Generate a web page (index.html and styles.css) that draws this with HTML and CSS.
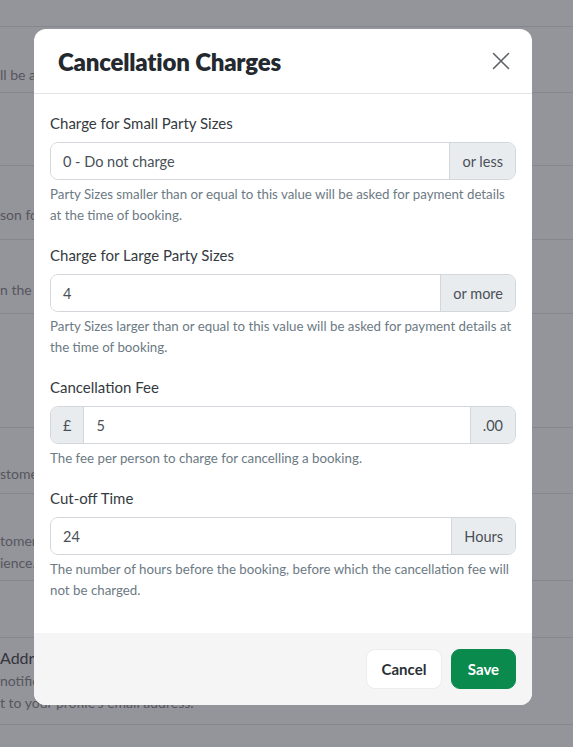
FILE: index.html
```html
<!DOCTYPE html>
<html lang="en">
<head>
<meta charset="utf-8">
<title>Cancellation Charges</title>
<link rel="stylesheet" href="styles.css">
</head>
<body>
<div class="page">
  <div class="row r1"></div>
  <div class="row r2"><p class="bgtext clip">ll be asked for payment details</p></div>
  <div class="row r3"></div>
  <div class="row r4"><p class="bgtext clip">son for cancelling</p></div>
  <div class="row r5"><p class="bgtext clip">n the cancellation</p></div>
  <div class="row r6"></div>
  <div class="row r7"><p class="bgtext clip">stomers</p></div>
  <div class="row r8"><p class="bgtext clip">tomers will be</p><p class="bgtext clip">ience.</p></div>
  <div class="row r9"></div>
  <div class="row r10"><p class="bgtitle clip">Address</p><p class="bgtext clip">notifications</p><p class="bgtext">t to your profile's email address.</p></div>
  <div class="row r11"></div>
</div>

<div class="modal">
  <div class="modal-header">
    <h5 class="modal-title">Cancellation Charges</h5>
    <button class="close" aria-label="Close">
      <svg width="18" height="18" viewBox="0 0 18 18"><path d="M1.5 1.5 L16.5 16.5 M16.5 1.5 L1.5 16.5" stroke="#5f6368" stroke-width="1.6" fill="none" stroke-linecap="round"/></svg>
    </button>
  </div>
  <div class="modal-body">
    <div class="group">
      <label class="label">Charge for Small Party Sizes</label>
      <div class="input-group">
        <div class="field">0 - Do not charge</div>
        <div class="addon addon-right">or less</div>
      </div>
      <p class="help">Party Sizes smaller than or equal to this value will be asked for payment details at the time of booking.</p>
    </div>
    <div class="group">
      <label class="label">Charge for Large Party Sizes</label>
      <div class="input-group">
        <div class="field">4</div>
        <div class="addon addon-right">or more</div>
      </div>
      <p class="help">Party Sizes larger than or equal to this value will be asked for payment details at the time of booking.</p>
    </div>
    <div class="group">
      <label class="label">Cancellation Fee</label>
      <div class="input-group">
        <div class="addon addon-left">£</div>
        <div class="field">5</div>
        <div class="addon addon-right">.00</div>
      </div>
      <p class="help">The fee per person to charge for cancelling a booking.</p>
    </div>
    <div class="group">
      <label class="label">Cut-off Time</label>
      <div class="input-group">
        <div class="field">24</div>
        <div class="addon addon-right">Hours</div>
      </div>
      <p class="help">The number of hours before the booking, before which the cancellation fee will not be charged.</p>
    </div>
  </div>
  <div class="modal-footer">
    <button class="btn btn-cancel">Cancel</button>
    <button class="btn btn-save">Save</button>
  </div>
</div>
</body>
</html>
```

FILE: styles.css
```css
* { box-sizing: border-box; }
html, body { margin: 0; padding: 0; }
body {
  background: #94949b;
  font-family: "Lato", "Noto Sans", sans-serif;
  width: 573px;
  height: 747px;
  overflow: hidden;
  position: relative;
}
.page { width: 573px; }
.row { border-bottom: 1px solid #86868e; overflow: hidden; white-space: nowrap; }
.r1 { height: 27px; }
.r2 { height: 66px; padding-top: 37px; }
.r3 { height: 73px; }
.r4 { height: 74px; padding-top: 38px; }
.r5 { height: 74px; padding-top: 39px; }
.r6 { height: 114px; }
.r7 { height: 66px; padding-top: 35px; }
.r8 { height: 87px; padding-top: 36px; }
.r9 { height: 57px; }
.r10 { height: 87px; padding-top: 8px; }
.r11 { height: 30px; }
.clip { width: 34px; overflow: hidden; }
.bgtext { margin: 0; font-size: 14px; line-height: 22px; color: #56565e; }
.bgtitle { margin: 0; font-size: 16px; line-height: 24px; color: #35353c; }

.modal {
  position: absolute;
  left: 34px;
  top: 29px;
  width: 498px;
  background: #fff;
  border-radius: 12px;
  overflow: hidden;
}
.modal-header {
  height: 65px;
  padding: 0 22px 0 24px;
  display: flex;
  align-items: center;
  justify-content: space-between;
  border-bottom: 1px solid #e2e4e7;
}
.modal-title {
  margin: 0;
  font-size: 24px;
  font-weight: 800;
  letter-spacing: -0.2px;
  color: #23292e;
}
.close {
  background: none;
  border: 0;
  padding: 0;
  width: 18px;
  height: 18px;
  display: flex;
}
.modal-body { padding: 18px 16px 14px; }
.group { margin-bottom: 18px; }
.label {
  display: block;
  font-size: 15px;
  line-height: 22px;
  color: #343a40;
  margin-bottom: 8px;
}
.input-group {
  display: flex;
  height: 38px;
  border: 1px solid #d3d7db;
  border-radius: 8px;
  overflow: hidden;
}
.field {
  flex: 1;
  display: flex;
  align-items: center;
  padding: 0 12px;
  font-size: 14.5px;
  color: #495057;
  background: #fff;
}
.addon {
  display: flex;
  align-items: center;
  padding: 0 12px;
  font-size: 14.5px;
  color: #495057;
  background: #e9ecef;
}
.addon-right { border-left: 1px solid #d3d7db; }
.addon-left { border-right: 1px solid #d3d7db; }
.help {
  margin: 4px 0 0;
  font-size: 13.3px;
  line-height: 21px;
  color: #6c7a84;
}
.modal-footer {
  height: 72px;
  background: #f5f5f6;
  display: flex;
  align-items: center;
  justify-content: flex-end;
  gap: 9px;
  padding: 0 16px;
}
.btn {
  height: 40px;
  border-radius: 9px;
  font-family: inherit;
  font-size: 15px;
  font-weight: 700;
  padding: 0 12px;
}
.btn-cancel { width: 76px; background: #fff; border: 1px solid #ececec; color: #2b3036; }
.btn-save { width: 65px; background: #0b8a4e; border: 1px solid #0b8a4e; color: #fff; }
```
